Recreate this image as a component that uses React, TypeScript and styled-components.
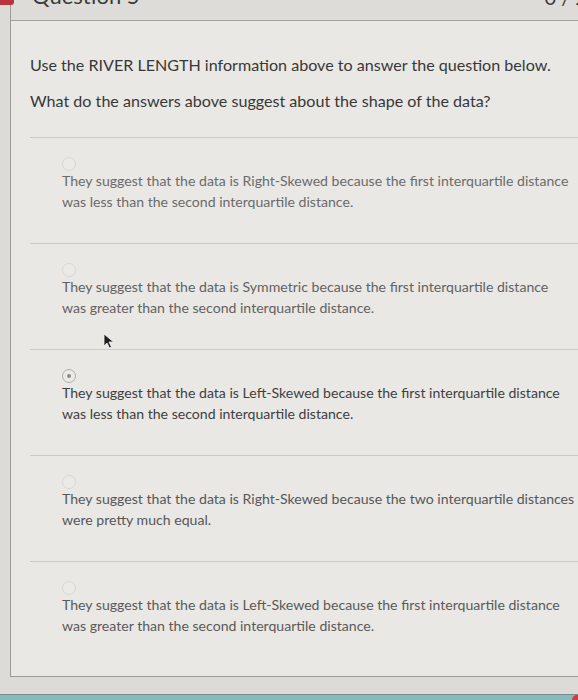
import React from 'react';
import styled, { createGlobalStyle } from 'styled-components';

const GlobalStyle = createGlobalStyle`
  html, body {
    margin: 0;
    padding: 0;
    background: #dbdad6;
    overflow: hidden;
  }
  body {
    font-family: 'Lato', 'Open Sans', sans-serif;
  }
`;

const Page = styled.div`
  position: relative;
  width: 578px;
  height: 700px;
  overflow: hidden;
  background: #dcdbd7;
  display: flex;
  flex-direction: column;
`;

const CardRow = styled.div`
  display: flex;
  padding-left: 10px;
`;

const Flag = styled.div`
  position: absolute;
  left: 0;
  top: 0;
  width: 14px;
  height: 5px;
  background: #b8333a;
  border-bottom-right-radius: 3px;
`;

const Card = styled.div`
  width: 640px;
  flex-shrink: 0;
  background: #e9e8e4;
  border-left: 1px solid #9c9b98;
  border-bottom: 1px solid #9c9b98;
`;

const Header = styled.div`
  height: 20px;
  overflow: hidden;
  display: flex;
  align-items: flex-start;
  padding: 0 32px 0 21px;
  background: #dedcd8;
  border-bottom: 1px solid #a3a29f;
`;

const HeaderTitle = styled.span`
  font-size: 22px;
  line-height: 22px;
  margin-top: -15px;
  color: #3a3a3a;
`;

const HeaderPoints = styled.span`
  margin-left: auto;
  font-size: 20px;
  line-height: 20px;
  margin-top: -13px;
  color: #3a3a3a;
`;

const Body = styled.div`
  padding: 32px 0 9px 19px;
`;

const Prompt = styled.p`
  margin: 0 0 12px;
  font-size: 16.1px;
  line-height: 24px;
  color: #383838;
`;

const Options = styled.div`
  margin-top: 24px;
`;

const Option = styled.div`
  border-top: 1px solid #cbcac6;
  padding: 19px 0 31px 32px;
`;

const Radio = styled.span<{ $checked?: boolean }>`
  display: flex;
  align-items: center;
  justify-content: center;
  width: 12px;
  height: 12px;
  margin-bottom: -1px;
  border-radius: 50%;
  border: 1px solid ${p => (p.$checked ? '#aeadaa' : '#d9d8d4')};
  background: #ebeae6;

  &::after {
    content: '';
    display: ${p => (p.$checked ? 'block' : 'none')};
    width: 4px;
    height: 4px;
    border-radius: 50%;
    background: #8a8a88;
  }
`;

const OptionText = styled.div<{ $tone: string }>`
  font-size: 14.1px;
  line-height: 21px;
  white-space: nowrap;
  color: ${p => p.$tone};
`;

const Gap = styled.div`
  flex: 1;
`;

const Taskbar = styled.div`
  position: relative;
  height: 5px;
  background: #86babd;
  border-top: 1px solid #7a8c8c;
`;

const Badge = styled.span`
  position: absolute;
  right: -4px;
  top: 0;
  width: 10px;
  height: 10px;
  border-radius: 50%;
  background: #d83a3a;
`;

const Cursor = styled.svg`
  position: absolute;
  left: 103px;
  top: 333px;
`;

const options = [
  {
    lines: [
      'They suggest that the data is Right-Skewed because the first interquartile distance',
      'was less than the second interquartile distance.',
    ],
    tone: '#6b6b6b',
  },
  {
    lines: [
      'They suggest that the data is Symmetric because the first interquartile distance',
      'was greater than the second interquartile distance.',
    ],
    tone: '#626262',
  },
  {
    lines: [
      'They suggest that the data is Left-Skewed because the first interquartile distance',
      'was less than the second interquartile distance.',
    ],
    tone: '#3f3f3f',
    checked: true,
  },
  {
    lines: [
      'They suggest that the data is Right-Skewed because the two interquartile distances',
      'were pretty much equal.',
    ],
    tone: '#575757',
  },
  {
    lines: [
      'They suggest that the data is Left-Skewed because the first interquartile distance',
      'was greater than the second interquartile distance.',
    ],
    tone: '#5a5a5a',
  },
];

export default function App() {
  return (
    <>
      <GlobalStyle />
      <Page>
        <Flag />
        <CardRow>
          <Card>
            <Header>
              <HeaderTitle>Question 5</HeaderTitle>
              <HeaderPoints>0 / 2 pts</HeaderPoints>
            </Header>
            <Body>
              <Prompt>Use the RIVER LENGTH information above to answer the question below.</Prompt>
              <Prompt>What do the answers above suggest about the shape of the data?</Prompt>
              <Options>
                {options.map((o, i) => (
                  <Option key={i}>
                    <Radio $checked={o.checked} />
                    <OptionText $tone={o.tone}>
                      {o.lines[0]}
                      <br />
                      {o.lines[1]}
                    </OptionText>
                  </Option>
                ))}
              </Options>
            </Body>
          </Card>
        </CardRow>
        <Gap />
        <Taskbar>
          <Badge />
        </Taskbar>
        <Cursor width="12" height="16" viewBox="0 0 12 16">
          <path d="M1 1 L1 13 L4 10 L6.5 15 L8.5 14 L6 9 L10.5 9 Z" fill="#1e1e1e" stroke="#f2f2f2" strokeWidth="0.8" />
        </Cursor>
      </Page>
    </>
  );
}
